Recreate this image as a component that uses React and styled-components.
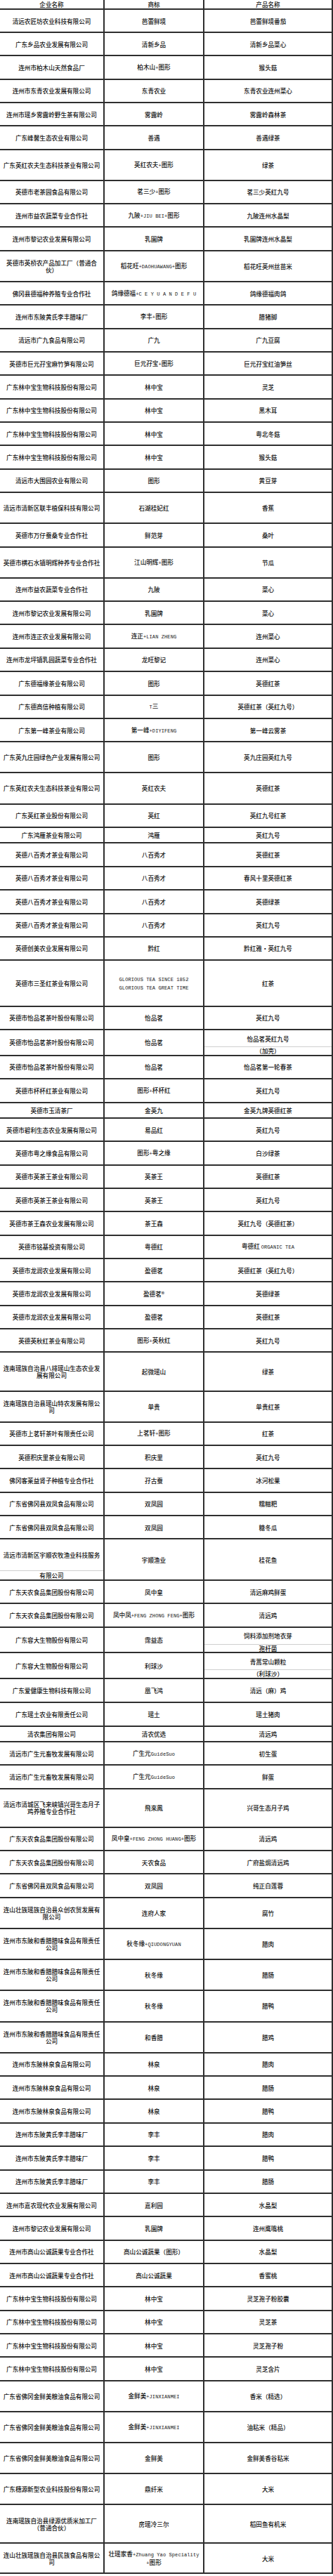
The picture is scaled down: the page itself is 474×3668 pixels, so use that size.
import React from 'react'
import styled, { createGlobalStyle } from 'styled-components'

const GlobalStyle = createGlobalStyle`
  html, body {
    margin: 0;
    padding: 0;
    background: #fff;
  }
  body {
    font-family: 'Noto Sans CJK SC', 'Noto Sans', sans-serif;
    color: #141414;
  }
`

const Table = styled.div`
  width: 474px;
  display: flex;
  flex-direction: column;
`

const Row = styled.div`
  display: grid;
  grid-template-columns: 149px 142px 183px;
  height: ${p => p.$h}px;
  box-sizing: border-box;
  border-bottom: 2px solid #2e2e2e;
`

const Cell = styled.div`
  display: flex;
  flex-direction: column;
  align-items: stretch;
  justify-content: center;
  box-sizing: border-box;
  border-right: 2px solid #2e2e2e;
  min-width: 0;
  overflow: hidden;
`

const Text = styled.div`
  padding: 0 3px;
  font-size: 8.6px;
  font-weight: 500;
  line-height: 10px;
  text-align: center;
  white-space: pre-line;
  word-break: break-all;
`

const Part = styled.div`
  display: flex;
  align-items: center;
  justify-content: center;
  box-sizing: border-box;
  height: ${p => (p.$h ? `${p.$h}px` : 'auto')};
  flex: ${p => (p.$h ? 'none' : '1')};
  border-bottom: ${p => (p.$line ? '1px solid #cfcfcf' : 'none')};
`

const Latin = styled.span`
  font-family: 'Liberation Mono', 'DejaVu Sans Mono', monospace;
  font-size: 7px;
  font-weight: 400;
  letter-spacing: 0.1px;
`

const HeadText = styled(Text)`
  font-size: 8.6px;
`

// bottom edge of every row, header first
const B = [
  14, 47, 80.3, 113.7, 147, 180.3, 213.7, 257.7, 291, 324.3,
  357.7, 402, 435.3, 468.7, 502, 535.3, 568.7, 602, 635.3, 668.7,
  702, 746.3, 779.7, 823.7, 857, 890.3, 923.7, 957.3, 990.7, 1024,
  1057.3, 1101.3, 1145.7, 1179, 1201.3, 1235, 1268.3, 1301.7, 1335, 1368.3,
  1434, 1467.3, 1504, 1537.3, 1571, 1593.3, 1626.7, 1660, 1693.3, 1726.7,
  1760, 1793.3, 1826.7, 1860, 1893.3, 1926.7, 1982, 2026, 2059.3, 2092.7,
  2126, 2159.3, 2192.7, 2251.3, 2284.7, 2318, 2354.7, 2391.3, 2425.3, 2459,
  2481.3, 2514.7, 2548, 2603, 2636.3, 2669.7, 2703, 2747.3, 2791.3, 2835.7,
  2880, 2924, 2957.3, 2990.7, 3024, 3057.3, 3091, 3124.3, 3157.7, 3191,
  3224.3, 3257.7, 3291, 3324.3, 3357.7, 3391, 3435.3, 3479.3, 3523.7, 3567.7,
  3622.7, 3666,
]

const LZB = '广东林中宝生物科技股份有限公司'
const BBX = '英德八百秀才茶业有限公司'
const YPM = '英德市怡品茗茶叶股份有限公司'
const YCW = '英德市英茶王茶业有限公司'
const LR = '英德市龙润农业发展有限公司'
const SF = '广东省佛冈县双凤食品有限公司'
const TN = '广东天农食品集团股份有限公司'
const RD = '广东容大生物股份有限公司'
const GSY = '清远市广生元畜牧发展有限公司'
const HXL = '连州市东陂和香腊腊味食品有限责任公司'
const LQ = '连州市东陂林泉食品有限公司'
const LF = '连州市东陂黄氏李丰腊味厂'
const LJ = '连州市黎记农业发展有限公司'
const GS = '连州市高山公诚蔬果专业合作社'
const JXM = '广东省佛冈金鲜美粮油食品有限公司'

// a split cell is { parts: [top, bottom], at: height of top part }
const rows = [
  ['清远农匠坊农业科技有限公司', '芭蕾鲜境', '芭蕾鲜境番茄'],
  ['广东乡品农业发展有限公司', '清新乡品', '清新乡品菜心'],
  ['连州市柏木山天然食品厂', '柏木山+图形', '猴头菇'],
  ['连州市东青农业发展有限公司', '东青农业', '东青农业连州菜心'],
  ['连州市瑶乡雾露岭野生茶有限公司', '雾露岭', '雾露岭森林茶'],
  ['广东峰馨生态农业有限公司', '善遇', '善遇绿茶'],
  ['广东英红农夫生态科技茶业有限公司', '英红农夫+图形', '绿茶'],
  ['英德市老茶园食品有限公司', '茗三少+图形', '茗三少英红九号'],
  ['连州市益农蔬菜专业合作社', '九陂+JIU BEI+图形', '九陂连州水晶梨'],
  [LJ, '乳園牌', '乳園牌连州水晶梨'],
  ['英德市英桥农产品加工厂（普通合伙）', '稻花旺+DAOHUAWANG+图形', '稻花旺英州丝苗米'],
  ['佛冈县德福种养殖专业合作社', '鸽缘德福+C E Y U A N D E F U', '鸽缘德福肉鸽'],
  [LF, '李丰+图形', '腊猪脚'],
  ['清远市广九食品有限公司', '广九', '广九豆腐'],
  ['英德市巨元孖宝麻竹笋有限公司', '巨元孖宝+图形', '巨元孖宝红油笋丝'],
  [LZB, '林中宝', '灵芝'],
  [LZB, '林中宝', '黑木耳'],
  [LZB, '林中宝', '粤北冬菇'],
  [LZB, '林中宝', '猴头菇'],
  ['清远市大围园农业有限公司', '图形', '黄豆芽'],
  ['清远市清新区联丰植保科技有限公司', '石湖桂妃红', '香蕉'],
  ['英德市万仔蚕桑专业合作社', '鲜范芽', '桑叶'],
  ['英德市横石水镇明辉种养专业合作社', '江山明辉+图形', '节瓜'],
  ['连州市益农蔬菜专业合作社', '九陂', '菜心'],
  [LJ, '乳園牌', '菜心'],
  ['连州市连正农业发展有限公司', '连正+LIAN ZHENG', '连州菜心'],
  ['连州市龙坪镇乳园蔬菜专业合作社', '龙旺黎记', '连州菜心'],
  ['广东德福缘茶业有限公司', '图形', '英德红茶'],
  ['广东德高信种植有限公司', 'T三', '英德红茶（英红九号）'],
  ['广东第一峰茶业有限公司', '第一峰+DIYIFENG', '第一峰云雾茶'],
  ['广东英九庄园绿色产业发展有限公司', '图形', '英九庄园英红九号'],
  ['广东英红农夫生态科技茶业有限公司', '英红农夫', '英德红茶'],
  ['广东英红茶业股份有限公司', '英红', '英红九号红茶'],
  ['广东鸿雁茶业有限公司', '鸿雁', '英红九号'],
  [BBX, '八百秀才', '英德红茶'],
  [BBX, '八百秀才', '春风十里英德红茶'],
  [BBX, '八百秀才', '英德绿茶'],
  [BBX, '八百秀才', '英红九号'],
  ['英德创美农业发展有限公司', '黔红', '黔红雅·英红九号'],
  ['英德市三圣红茶业有限公司', 'GLORIOUS TEA SINCE 1852\nGLORIOUS TEA GREAT TIME', '红茶'],
  [YPM, '怡品茗', '英红九号'],
  [YPM, '怡品茗', { parts: ['怡品茗英红九号', '（加壳）'], at: 24 }],
  [YPM, '怡品茗', '怡品茗第一轮春茶'],
  ['英德市杯杯红茶业有限公司', '图形+杯杯红', '英红九号'],
  ['英德市玉清茶厂', '金英九', '金英九牌英德红茶'],
  ['英德市碧利生态农业发展有限公司', '易品红', '英红九号'],
  ['英德市粤之缘食品有限公司', '图形+粤之缘', '白沙绿茶'],
  [YCW, '英茶王', '英德红茶'],
  [YCW, '英茶王', '英红九号'],
  ['英德市茶王森农业发展有限公司', '茶王森', '英红九号（英德红茶）'],
  ['英德市铭基投资有限公司', '粤德红', '粤德红 ORGANIC TEA'],
  [LR, '盈德茗', '英德红茶（英红九号）'],
  [LR, '盈德茗®', '英德绿茶'],
  [LR, '盈德茗', '英德红茶'],
  ['英德英秋红茶业有限公司', '图形+英秋红', '英红九号'],
  ['连南瑶族自治县八排瑶山生态农业发展有限公司', '起微瑶山', '绿茶'],
  ['连南瑶族自治县瑶山特农发展有限公司', '单贵', '单贵红茶'],
  ['英德市上茗轩茶叶有限责任公司', '上茗轩+图形', '红茶'],
  ['英德积庆里茶业有限公司', '积庆里', '英红九号'],
  ['佛冈客莱益肾子种植专业合作社', '孖古蚕', '冰河松果'],
  [SF, '双凤园', '糯糍粑'],
  [SF, '双凤园', '糖冬瓜'],
  [{ parts: ['清远市清新区宇顺农牧渔业科技服务', '有限公司'], at: 45 }, '宇顺渔业', '桂花鱼'],
  [TN, '凤中皇', '清远麻鸡鲜蛋'],
  [TN, '凤中凤+FENG ZHONG FENG+图形', '清远鸡'],
  [RD, '霈益态', { parts: ['饲料添加剂地衣芽', '孢杆菌'], at: 24 }],
  [RD, '利球沙', { parts: ['青蒿常山颗粒', '（利球沙）'], at: 23.5 }],
  ['广东爱健康生物科技有限公司', '凰飞鸿', '清远（麻）鸡'],
  ['广东瑶土农业有限责任公司', '瑶土', '瑶土猪肉'],
  ['清农集团有限公司', '清农优选', '清远鸡'],
  [GSY, '广生元GuideSuo', '初生蛋'],
  [GSY, '广生元GuideSuo', '鲜蛋'],
  ['清远市清城区飞来峡镇兴哥生态月子鸡养殖专业合作社', '飛來鳳', '兴哥生态月子鸡'],
  [TN, '凤中皇+FENG ZHONG HUANG+图形', '清远鸡'],
  [TN, '天农食品', '广府盐焗清远鸡'],
  [SF, '双凤园', '纯正白莲蓉'],
  ['连山壮族瑶族自治县众创农贸发展有限公司', '连府人家', '腐竹'],
  [HXL, '秋冬缘+QIUDONGYUAN', '腊肉'],
  [HXL, '秋冬缘', '腊肠'],
  [HXL, '秋冬缘', '腊鸭'],
  [HXL, '和香腊', '腊鸡'],
  [LQ, '林泉', '腊肉'],
  [LQ, '林泉', '腊肠'],
  [LQ, '林泉', '腊鸭'],
  [LF, '李丰', '腊肉'],
  [LF, '李丰', '腊鸭'],
  [LF, '李丰', '腊肠'],
  ['连州市嘉农现代农业发展有限公司', '嘉利园', '水晶梨'],
  [LJ, '乳園牌', '连州鹰嘴桃'],
  [GS, '高山公诚蔬果（图形）', '水晶梨'],
  [GS, '高山公诚蔬果', '香蜜桃'],
  [LZB, '林中宝', '灵芝孢子粉胶囊'],
  [LZB, '林中宝', '灵芝茶'],
  [LZB, '林中宝', '灵芝孢子粉'],
  [LZB, '林中宝', '灵芝含片'],
  [JXM, '金鲜美+JINXIANMEI', '香米（精选）'],
  [JXM, '金鲜美+JINXIANMEI', '油粘米（精品）'],
  [JXM, '金鲜美', '金鲜美香谷粘米'],
  ['广东穗源新型农业科技股份有限公司', '鼎纤米', '大米'],
  ['连南瑶族自治县绿源优质米加工厂（普通合伙）', '房瑶冷三尔', '稻田鱼有机米'],
  ['连山壮族瑶族自治县民族食品有限公司', '壮瑶家香+Zhuang Yao Speciality+图形', '大米'],
]

// latin runs get the narrow mono face, like the scanned sheet
const withLatin = s =>
  s.split(/([\x21-\x7E](?:[\x20-\x7E]*[\x21-\x7E])?)/).map((piece, i) =>
    i % 2 ? <Latin key={i}>{piece}</Latin> : piece
  )

const Content = ({ value }) => {
  if (typeof value === 'string') return <Text>{withLatin(value)}</Text>
  return (
    <>
      <Part $h={value.at} $line>
        <Text>{withLatin(value.parts[0])}</Text>
      </Part>
      <Part>
        <Text>{withLatin(value.parts[1])}</Text>
      </Part>
    </>
  )
}

const App = () => (
  <>
    <GlobalStyle />
    <Table>
      <Row $h={B[0]}>
        <Cell><HeadText>企业名称</HeadText></Cell>
        <Cell><HeadText>商标</HeadText></Cell>
        <Cell><HeadText>产品名称</HeadText></Cell>
      </Row>
      {rows.map((r, i) => (
        <Row key={i} $h={B[i + 1] - B[i]}>
          {r.map((v, j) => (
            <Cell key={j}>
              <Content value={v} />
            </Cell>
          ))}
        </Row>
      ))}
    </Table>
  </>
)

export default App
